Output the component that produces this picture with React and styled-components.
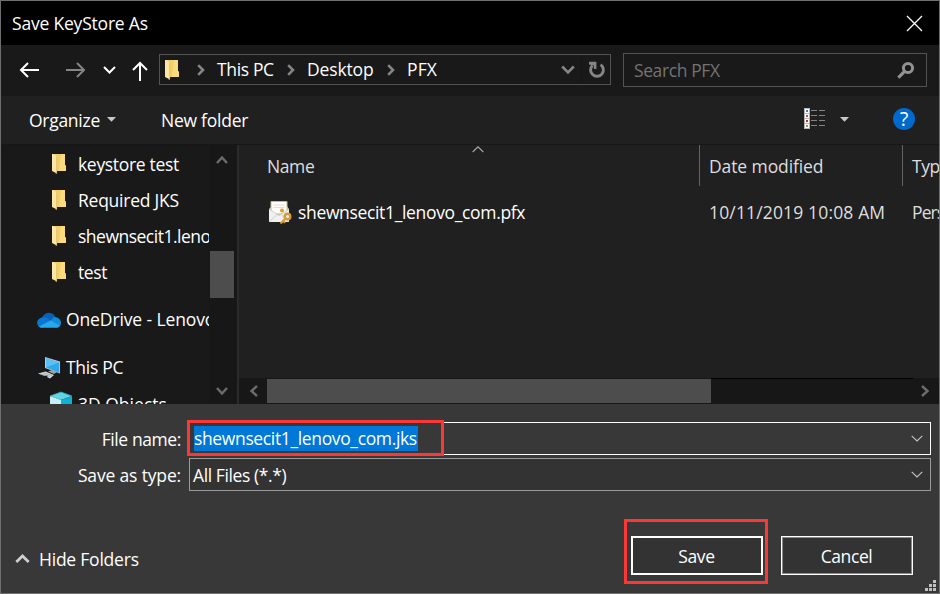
import styled, { createGlobalStyle, css } from "styled-components";

const GlobalStyle = createGlobalStyle`
  * {
    box-sizing: border-box;
  }
  body {
    margin: 0;
    background: #191919;
  }
`;

const Dialog = styled.div`
  position: relative;
  display: flex;
  flex-direction: column;
  width: 940px;
  height: 594px;
  border: 1px solid #6e6e6e;
  background: #202020;
  color: #ffffff;
  font-family: "Open Sans", "Noto Sans", sans-serif;
  font-size: 17.5px;
  line-height: 24px;
  overflow: hidden;
`;

const Text = styled.span`
  flex: none;
  padding-bottom: ${({ $lift }) => $lift || 0}px;
  white-space: nowrap;
  letter-spacing: ${({ $spacing = -0.4 }) => $spacing}px;
  color: ${({ $color }) => $color || "inherit"};
`;

const Icon = styled.svg`
  display: block;
  flex: none;
  overflow: visible;
`;

const TitleBar = styled.header`
  display: flex;
  justify-content: space-between;
  flex: none;
  height: 44px;
  padding: 10px 16px 0 11px;
  background: #000000;
`;

const CloseButton = styled.div`
  padding-top: 4px;
`;

const NavBar = styled.nav`
  display: flex;
  align-items: flex-start;
  flex: none;
  height: 51px;
  padding: 8px 12px 0 17px;
  background: #191919;
`;

const NavButtons = styled.div`
  display: flex;
  width: 141px;
  padding-top: 7px;
`;

const AddressBar = styled.div`
  display: flex;
  align-items: center;
  width: 452px;
  height: 31px;
  margin: 1px 12px 0 0;
  padding-left: 5px;
  border: 1px solid #535353;
`;

const Crumb = styled.div`
  display: flex;
  align-items: center;
  width: ${({ $width }) => $width}px;
  height: 29px;
`;

const Refresh = styled.div`
  display: flex;
  align-items: center;
  height: 29px;
  margin-left: 6px;
  padding-left: 6px;
  border-left: 1px solid #151515;
`;

const Spacer = styled.div`
  flex: 1;
`;

const SearchBox = styled.div`
  display: flex;
  align-items: center;
  justify-content: space-between;
  width: 304px;
  height: 34px;
  padding: 0 12px 0 10px;
  border: 1px solid #535353;
`;

const Toolbar = styled.div`
  display: flex;
  align-items: flex-start;
  flex: none;
  height: 49px;
  padding: 12px 24px 0 28px;
  border-bottom: 1px solid #171717;
`;

const ToolButton = styled.div`
  display: flex;
  width: ${({ $width }) => $width}px;
`;

const CaretSlot = styled.div`
  padding: 9px 0 0 ${({ $left }) => $left || 0}px;
`;

const Body = styled.div`
  display: flex;
  flex: none;
  height: 259px;
`;

const Sidebar = styled.aside`
  display: flex;
  width: 235px;
  background: #191919;
`;

const Tree = styled.div`
  width: 208px;
  height: 259px;
  padding-top: 1px;
  overflow: hidden;
`;

const TreeItem = styled.div`
  display: flex;
  align-items: center;
  height: 36px;
  margin-top: ${({ $gap }) => $gap || 0}px;
  padding-left: ${({ $indent }) => $indent}px;
`;

const IconSlot = styled.div`
  flex: none;
  width: ${({ $width }) => $width}px;
`;

const VerticalScroll = styled.div`
  display: flex;
  flex-direction: column;
  align-items: center;
  width: 27px;
  padding: 10px 2px 8px 1px;
  background: #171717;
`;

const VerticalThumb = styled.div`
  width: 24px;
  height: 47px;
  margin: 86px 0 auto;
  background: #4d4d4d;
`;

const Splitter = styled.div`
  width: 3px;
  border-left: 1px solid #171717;
  background: #2b2b2b;
`;

const FileList = styled.main`
  display: flex;
  flex-direction: column;
  flex: 1;
  min-width: 0;
  color: #dedede;
`;

const columns = css`
  display: grid;
  grid-template-columns: 461px 203px 80px;
  overflow: hidden;
`;

const ColumnHeader = styled.div`
  ${columns}
  height: 41px;
`;

const ColumnCell = styled.div`
  position: relative;
  padding: 9px 0 0 ${({ $indent }) => $indent || 9}px;
  border-right: 1px solid #636363;
`;

const SortMark = styled.div`
  position: absolute;
  top: 1px;
  left: 233px;
`;

const FileRow = styled.div`
  ${columns}
  height: 36px;
  margin-top: 9px;
`;

const FileCell = styled.div`
  display: flex;
  align-items: center;
  padding-left: ${({ $indent }) => $indent || 9}px;
`;

const HorizontalScroll = styled.div`
  display: flex;
  align-items: center;
  height: 26px;
  margin-top: auto;
  padding: 0 8px 0 9px;
  background: #171717;
`;

const HorizontalThumb = styled.div`
  width: 444px;
  height: 24px;
  margin-left: 7px;
  background: #4d4d4d;
`;

const HorizontalTrack = styled.div`
  align-self: flex-start;
  width: 202px;
  height: 1px;
  margin-right: auto;
  background: #000000;
`;

const Footer = styled.footer`
  display: flex;
  flex-direction: column;
  flex: 1;
  background: #383838;
`;

const Field = styled.div`
  display: flex;
  align-items: center;
  justify-content: flex-end;
  height: 33px;
  margin: ${({ $top }) => $top}px 8px 0 0;
`;

const Combo = styled.div`
  position: relative;
  display: flex;
  align-items: center;
  justify-content: space-between;
  width: 742px;
  height: 33px;
  margin-left: 8px;
  padding: 0 7px 0 ${({ $focused }) => ($focused ? 4 : 3)}px;
  border: 1px solid ${({ $focused }) => ($focused ? "#ffffff" : "#9b9b9b")};
  background: ${({ $focused }) => ($focused ? "#383838" : "#333333")};
`;

const Selection = styled.div`
  display: flex;
  align-items: center;
  width: 224px;
  height: 25px;
  margin-bottom: 1px;
  background: #0078d7;
`;

const Highlight = styled.div`
  position: absolute;
  top: ${({ $top }) => $top}px;
  left: ${({ $left }) => $left}px;
  width: ${({ $width }) => $width}px;
  height: ${({ $height }) => $height}px;
  border: 3px solid #fc3737;
`;

const Actions = styled.div`
  display: flex;
  align-items: center;
  height: 39px;
  margin-top: 45px;
  padding: 0 26px 0 14px;
`;

const HideFolders = styled.div`
  display: flex;
  align-items: center;
  gap: 9px;
  margin: 7px auto 0 0;
`;

const Button = styled.button`
  position: relative;
  width: 132px;
  height: 39px;
  margin-left: ${({ $primary }) => ($primary ? 0 : 18)}px;
  padding: 1px 1px 0 0;
  border: ${({ $primary }) => ($primary ? 2 : 1)}px solid #ffffff;
  background: #333333;
  box-shadow: ${({ $primary }) => ($primary ? "none" : "inset 0 0 0 1px #8b8b8b")};
  color: #ffffff;
  font: inherit;
`;

const ResizeGrip = styled.div`
  position: absolute;
  right: 3px;
  bottom: 2px;
`;

const HelpBadge = styled.div`
  width: 22px;
  height: 22px;
  border-radius: 50%;
  background: #0069cc;
  font-size: 20px;
  line-height: 22px;
  text-align: center;
`;

const FolderIcon = () => (
  <Icon width="14" height="20" viewBox="0 0 14 20">
    <path d="M1 0H13V11L14 12V17H4Z" fill="#f4ce68" />
    <path d="M9 0H13V11L14 12V17H7Z" fill="#fadc7e" />
    <path d="M0 0H1.5L5 2.5V19.5L0 17Z" fill="#fde6a3" />
    <path d="M4.6 2.5V19.5L3 18.7" stroke="#d9b65c" strokeWidth=".7" fill="none" />
  </Icon>
);

const CrumbArrow = () => (
  <Icon width="8" height="12" viewBox="0 0 8 12">
    <path d="M1.2 1.2L6 6L1.2 10.8" stroke="#858585" strokeWidth="2.6" fill="none" />
  </Icon>
);

const SmallCaret = () => (
  <Icon width="9" height="5" viewBox="0 0 9 5">
    <path d="M0 0H9L4.5 4.8Z" fill="#c8c8c8" />
  </Icon>
);

const ComboArrow = () => (
  <Icon width="12" height="7" viewBox="0 0 12 7">
    <path d="M.7 .8L6 6L11.3 .8" stroke="#c6c6c6" strokeWidth="1.1" fill="none" />
  </Icon>
);

const ScrollArrow = ({ rotate = 0 }) => (
  <Icon width="12" height="10" viewBox="0 0 12 10">
    <path
      d="M1 8L6 2.5L11 8"
      stroke="#6c6c6c"
      strokeWidth="2.4"
      fill="none"
      transform={`rotate(${rotate} 6 5)`}
    />
  </Icon>
);

const CloudIcon = () => (
  <Icon width="24" height="16" viewBox="0 0 24 16">
    <path d="M5 6C7 0 15-1.5 18.5 5L21 8 12 11Z" fill="#0a61b4" />
    <path d="M12 11L16 5.7C20 4 24 7 24 11C24 14 22 15.8 19 15.8Z" fill="#1389dc" />
    <path d="M5 15.8C-1 15.5-1.5 7.5 4 5.8C8 4 11 6.5 14 9L9 14Z" fill="#0878d4" />
    <path d="M2 14.5L13.7 8.6L22.8 13.6C21.8 15.2 20.5 15.8 19 15.8H5Q3.2 15.8 2 14.5Z" fill="#28a8ea" />
  </Icon>
);

const ComputerIcon = () => (
  <Icon width="23" height="22" viewBox="0 0 23 22">
    <path d="M7 0L22 4.5V16.5L7 11Z" fill="#b9cbd6" />
    <path d="M8 1.3L21.2 5.4V15.4L8 10.4Z" fill="#2fa7ee" />
    <path d="M8 1.3L21.2 5.4L8 10.4Z" fill="#5abef7" />
    <path d="M10 14.5L14 13L19 15L16 17Z" fill="#9da4a8" />
    <path d="M0 16.5L7.5 14.5L16 18L12 21.5L9 20L10 18.5L6 18.8Z" fill="#d5dadd" />
    <path d="M2 16.8L12 19.4M5 15.7L14 18.5" stroke="#8b9297" strokeWidth=".6" />
  </Icon>
);

const CubeIcon = () => (
  <Icon width="22" height="24" viewBox="0 0 22 24">
    <path d="M0 4L11 0L22 4L11 8Z" fill="#62d5e3" />
    <path d="M0 4L11 8V24L0 19Z" fill="#c5f1f4" />
    <path d="M22 4L11 8V24L22 19Z" fill="#0fb0d3" />
    <path d="M0 4L11 0L22 4" stroke="#2aa4bc" strokeWidth=".8" fill="none" />
  </Icon>
);

const CertificateIcon = () => (
  <Icon width="24" height="24" viewBox="0 0 24 24">
    <path d="M0 8L3 5H18L20 8V21H0Z" fill="#c9c9c9" />
    <path d="M2 .5H18V13H2Z" fill="#fffdf8" stroke="#c6b69b" strokeWidth="1" />
    <path d="M4.5 4H15.5M4.5 6.5H15.5" stroke="#dcdce3" strokeWidth="1" />
    <circle cx="13" cy="9.5" r="2" fill="#dfa021" />
    <path d="M0 8L10 14.5L20 8V21H0Z" fill="#f0f0f0" />
    <path d="M0 21L8 13.5M20 21L12 13.5M0 8L10 14.5L20 8" stroke="#c4c4c4" fill="none" strokeWidth=".8" />
    <circle cx="18.5" cy="15.5" r="2.8" fill="none" stroke="#d99b35" strokeWidth="2.4" />
    <path d="M16.5 17.5L11.5 22.5M14.5 20L16 21.8" stroke="#d99b35" strokeWidth="2.1" />
  </Icon>
);

const DetailsIcon = () => (
  <Icon width="21" height="21" viewBox="0 0 21 21" shapeRendering="crispEdges">
    <path d="M0 0H6V21H0Z" fill="#b5b5b5" />
    {["#4a79b5", "#7b6b55", "#d22c1f", "#8d9b62"].map((fill, i) => (
      <g key={fill}>
        <rect x="1" y={1 + i * 5} width="4" height="4" fill="#ffffff" />
        <rect x="2" y={2 + i * 5} width="2" height="2" fill={fill} />
        <path d={`M7 ${2.5 + i * 5}H13M15 ${2.5 + i * 5}H21`} stroke="#858585" />
      </g>
    ))}
  </Icon>
);

const folders = [
  { name: "keystore test", spacing: -0.32 },
  { name: "Required JKS", spacing: -0.24 },
  { name: "shewnsecit1.lenovo", spacing: -0.5 },
  { name: "test", spacing: -0.4 },
];

const crumbs = [
  { name: "This PC", width: 90, spacing: -0.35 },
  { name: "Desktop", width: 100, spacing: -0.15 },
  { name: "PFX", width: 60, spacing: 0.1 },
];

const App = () => (
  <>
    <GlobalStyle />
    <Dialog>
      <TitleBar>
        <Text $spacing={-0.2}>Save KeyStore As</Text>
        <CloseButton>
          <Icon width="17" height="17" viewBox="0 0 17 17">
            <path d="M1 1L16 16M16 1L1 16" stroke="#ffffff" strokeWidth="1.3" />
          </Icon>
        </CloseButton>
      </TitleBar>

      <NavBar>
        <NavButtons>
          <Icon width="125" height="22" viewBox="0 0 125 22" fill="none" strokeWidth="2">
            <path d="M21 10H3M10 3L3 10L10 17" stroke="#ffffff" />
            <path d="M48 10H66M59 3L66 10L59 17" stroke="#858585" />
            <path d="M86 7L91.5 12.5L97 7" stroke="#ffffff" />
            <path d="M122 21V3M115 10L122 3L129 10" stroke="#ffffff" />
          </Icon>
        </NavButtons>
        <AddressBar>
          <IconSlot $width={32}>
            <FolderIcon />
          </IconSlot>
          {crumbs.map(({ name, width, spacing }) => (
            <Crumb key={name} $width={width}>
              <IconSlot $width={20}>
                <CrumbArrow />
              </IconSlot>
              <Text $spacing={spacing} $lift={1}>
                {name}
              </Text>
            </Crumb>
          ))}
          <Spacer />
          <Icon width="14" height="10" viewBox="0 0 14 10">
            <path d="M1.2 1.5L7 7.3L12.8 1.5" stroke="#858585" strokeWidth="2.6" fill="none" />
          </Icon>
          <Refresh>
            <Icon width="22" height="18" viewBox="0 0 22 18">
              <path d="M12.6 3.6A6.4 6.4 0 1 1 4.4 4.4" stroke="#858585" strokeWidth="2.9" fill="none" />
              <path d="M1 .7H8.4V8H6L5.7 4.4L1 3.4Z" fill="#858585" />
            </Icon>
          </Refresh>
        </AddressBar>
        <SearchBox>
          <Text $color="#737373">Search PFX</Text>
          <Icon width="17" height="17" viewBox="0 0 17 17">
            <circle cx="11" cy="6" r="4.6" stroke="#929292" strokeWidth="3" fill="none" />
            <path d="M7.8 9.2L1.4 15.6" stroke="#929292" strokeWidth="3.2" />
          </Icon>
        </SearchBox>
      </NavBar>

      <Toolbar>
        <ToolButton $width={132}>
          <Text $spacing={-0.28}>Organize</Text>
          <CaretSlot $left={7}>
            <SmallCaret />
          </CaretSlot>
        </ToolButton>
        <Text $spacing={-0.25}>New folder</Text>
        <Spacer />
        <ToolButton $width={36}>
          <DetailsIcon />
        </ToolButton>
        <ToolButton $width={53}>
          <CaretSlot>
            <SmallCaret />
          </CaretSlot>
        </ToolButton>
        <HelpBadge>?</HelpBadge>
      </Toolbar>

      <Body>
        <Sidebar>
          <Tree>
            {folders.map(({ name, spacing }) => (
              <TreeItem key={name} $indent={51}>
                <IconSlot $width={26}>
                  <FolderIcon />
                </IconSlot>
                <Text $spacing={spacing} $lift={1}>
                  {name}
                </Text>
              </TreeItem>
            ))}
            <TreeItem $indent={36} $gap={12}>
              <IconSlot $width={29}>
                <CloudIcon />
              </IconSlot>
              <Text $spacing={-0.12} $lift={2}>
                OneDrive - Lenovo
              </Text>
            </TreeItem>
            <TreeItem $indent={37} $gap={12}>
              <IconSlot $width={28}>
                <ComputerIcon />
              </IconSlot>
              <Text $spacing={-0.3} $lift={2}>
                This PC
              </Text>
            </TreeItem>
            <TreeItem $indent={49}>
              <IconSlot $width={28}>
                <CubeIcon />
              </IconSlot>
              <Text $spacing={0} $lift={1}>
                3D Objects
              </Text>
            </TreeItem>
          </Tree>
          <VerticalScroll>
            <ScrollArrow />
            <VerticalThumb />
            <ScrollArrow rotate={180} />
          </VerticalScroll>
        </Sidebar>
        <Splitter />
        <FileList>
          <ColumnHeader>
            <ColumnCell $indent={28}>
              <Text>Name</Text>
              <SortMark>
                <Icon width="12" height="7" viewBox="0 0 12 7">
                  <path d="M.7 6L6 .8L11.3 6" stroke="#a9a9a9" strokeWidth="1.1" fill="none" />
                </Icon>
              </SortMark>
            </ColumnCell>
            <ColumnCell>
              <Text $spacing={-0.1}>Date modified</Text>
            </ColumnCell>
            <ColumnCell>
              <Text $spacing={-0.4}>Type</Text>
            </ColumnCell>
          </ColumnHeader>
          <FileRow>
            <FileCell $indent={30}>
              <IconSlot $width={29}>
                <CertificateIcon />
              </IconSlot>
              <Text $color="#ffffff" $spacing={-0.34} $lift={2}>
                shewnsecit1_lenovo_com.pfx
              </Text>
            </FileCell>
            <FileCell>
              <Text $spacing={0.15} $lift={2}>
                10/11/2019 10:08 AM
              </Text>
            </FileCell>
            <FileCell>
              <Text $spacing={-0.9} $lift={2}>
                Personal
              </Text>
            </FileCell>
          </FileRow>
          <HorizontalScroll>
            <ScrollArrow rotate={-90} />
            <HorizontalThumb />
            <HorizontalTrack />
            <ScrollArrow rotate={90} />
          </HorizontalScroll>
        </FileList>
      </Body>

      <Footer>
        <Field $top={18}>
          <Text>File name:</Text>
          <Combo $focused>
            <Selection>
              <Text $spacing={-0.36} $lift={1}>
                shewnsecit1_lenovo_com.jks
              </Text>
            </Selection>
            <ComboArrow />
            <Highlight $top={-3} $left={-3} $width={257} $height={36} />
          </Combo>
        </Field>
        <Field $top={3}>
          <Text $spacing={-0.16}>Save as type:</Text>
          <Combo>
            <Text>All Files (*.*)</Text>
            <ComboArrow />
          </Combo>
        </Field>
        <Actions>
          <HideFolders>
            <Icon width="15" height="10" viewBox="0 0 15 10">
              <path d="M1.3 8L7.5 2L13.7 8" stroke="#d0d0d0" strokeWidth="2.7" fill="none" />
            </Icon>
            <Text $spacing={-0.22}>Hide Folders</Text>
          </HideFolders>
          <Button $primary>
            <Text>Save</Text>
            <Highlight $top={-19} $left={-9} $width={144} $height={65} />
          </Button>
          <Button>
            <Text>Cancel</Text>
          </Button>
        </Actions>
      </Footer>
      <ResizeGrip>
        <Icon width="11" height="11" viewBox="0 0 11 11">
          <path
            d="M8 0h3v3h-3zM4 4h3v3h-3zM8 4h3v3h-3zM0 8h3v3h-3zM4 8h3v3h-3zM8 8h3v3h-3z"
            fill="#bfbfbf"
          />
        </Icon>
      </ResizeGrip>
    </Dialog>
  </>
);

export default App;
